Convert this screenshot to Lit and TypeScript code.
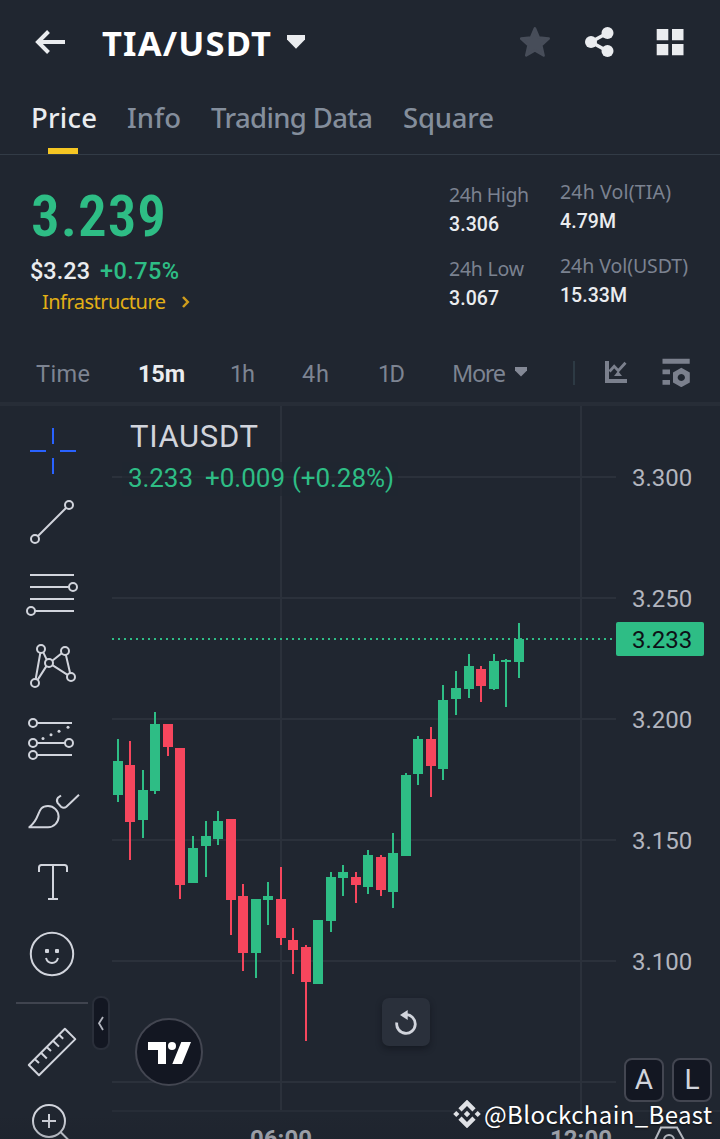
import { LitElement, html, svg, css } from "lit";
import { customElement, property } from "lit/decorators.js";

/** One line of text, tracked so that it fills a given width. */
@customElement("fit-label")
class FitLabel extends LitElement {
  @property() text = "";
  @property({ type: Number }) span = 0;

  static styles = css`
    :host { display: block; flex: none; white-space: pre; }
    .t { display: inline-block; }
  `;

  render() {
    return html`<span class="t">${this.text}</span>`;
  }

  updated() {
    const el = this.renderRoot.querySelector(".t") as HTMLElement;
    this.style.width = `${this.span}px`;
    el.style.letterSpacing = "0px";
    const natural = el.getBoundingClientRect().width;
    el.style.letterSpacing = `${(this.span - natural) / Math.max(1, this.text.length - 1)}px`;
  }
}

// [body left, body top, body bottom, high, low, rising]
const CANDLES: [number, number, number, number, number, number][] = [
  [113, 761, 795, 739, 802, 1], [125, 765, 822, 741, 860, 0], [138, 790, 820, 770, 838, 1],
  [150, 724, 791, 712, 794, 1], [163, 724, 747, 724, 756, 0], [175, 748, 885, 748, 899, 0],
  [188, 848, 883, 836, 883, 1], [201, 836, 846, 821, 877, 1], [213, 821, 839, 811, 845, 1],
  [226, 819, 900, 819, 935, 0], [238, 896, 953, 884, 971, 0], [251, 899, 953, 899, 978, 1],
  [263, 896, 900, 882, 925, 1], [276, 899, 938, 867, 945, 0], [288, 940, 950, 928, 974, 0],
  [301, 947, 982, 945, 1041, 0], [313, 920, 984, 920, 984, 1], [326, 877, 921, 872, 932, 1],
  [338, 872, 878, 865, 896, 1], [351, 877, 885, 872, 903, 0], [363, 855, 887, 850, 894, 1],
  [376, 857, 890, 855, 896, 0], [388, 853, 892, 833, 908, 1], [401, 775, 856, 773, 856, 1],
  [413, 739, 774, 736, 785, 1], [426, 739, 766, 727, 797, 0], [438, 700, 769, 685, 780, 1],
  [451, 688, 699, 671, 715, 1], [464, 666, 689, 654, 698, 1], [476, 669, 686, 666, 702, 0],
  [489, 661, 689, 654, 690, 1], [501, 660, 662, 659, 707, 1], [514, 639, 662, 623, 678, 1],
];

const SCALE: [string, number][] = [
  ["3.300", 477], ["3.250", 598], ["3.200", 719], ["3.150", 840], ["3.100", 961], ["", 1082],
];

const TOOLS = [
  svg`<path class="blue" d="M53 428V444M53 458V474M30 451H46M60 451H76"/>`,
  svg`<path d="M38 536L66 508"/><circle cx="35" cy="539" r="4"/><circle cx="69" cy="505" r="4"/>`,
  svg`<path d="M30 575H74M30 587H69M30 599H74M35 611H74"/><circle cx="73" cy="587" r="4"/><circle cx="31" cy="611" r="4"/>`,
  svg`<path d="M40.3 653L35.7 679M43.3 652.3L46.7 659.7M46.4 666.1L37.6 679.9M52.3 660.8L61.7 653.2M52.4 665.1L67.6 674.9M65.9 655L70.1 673"/>
    <circle cx="41" cy="649" r="4"/><circle cx="65" cy="651" r="4"/><circle cx="49" cy="663" r="4"/><circle cx="35" cy="683" r="4"/><circle cx="71" cy="677" r="4"/>`,
  svg`<path d="M37 723H72M37 743H65M37 755H72"/><circle cx="33" cy="723" r="4"/><circle cx="33" cy="743" r="4"/><circle cx="69" cy="743" r="4"/><circle cx="33" cy="755" r="4"/>
    <g class="dot"><circle cx="43" cy="738.5" r="1.5"/><circle cx="51" cy="734.8" r="1.5"/><circle cx="59" cy="731.2" r="1.5"/><circle cx="68" cy="727.2" r="1.5"/></g>`,
  svg`<path d="M28.500 827.200H48A10.600 10.600 0 0 0 48 806C36 806 41.500 818 29.500 827M61 795.500L58 797.700Q56 800.500 57.600 803L61 806.700Q63.800 808.800 66.400 806.700L79 794.800"/>`,
  svg`<path d="M39 872V867.500Q39 865 41.500 865H64.500Q67 865 67 867.500V872M53 865V899M48 899H58"/>`,
  svg`<circle cx="52" cy="954" r="21.200"/><path d="M46 958Q47.500 963 52 963T58 958"/><g class="dot"><rect x="45" y="949" width="4" height="4" rx="1"/><rect x="55" y="949" width="4" height="4" rx="1"/></g>`,
];

@customElement("app-root")
class AppRoot extends LitElement {
  static styles = css`
    :host { display: block; width: 720px; height: 1139px; overflow: hidden; position: relative;
      background: #202630; color: #eaecef; font-family: "Noto Sans", sans-serif; }
    * { box-sizing: border-box; }
    svg { display: block; flex: none; }
    .top { height: 84px; display: flex; align-items: center; padding: 0 31px 0 30px; }
    .pair { margin-left: 31px; padding-top: 2px; font-size: 34.5px; font-weight: 700; line-height: 82px; color: #fff; }
    .caret { margin-left: 16px; }
    .actions { margin-left: auto; display: flex; align-items: center; }
    .tabs { height: 71px; display: flex; gap: 30px; padding-left: 31px; border-bottom: 1px solid #323b46;
      font-size: 27.5px; font-weight: 500; color: #848e9c; }
    .tab { display: flex; flex-direction: column; align-items: center; }
    .tab .name { height: 64px; line-height: 67px; }
    .on { color: #eaecef; }
    .bar { width: 30px; height: 6px; background: #f5c623; margin-right: 2px; }
    .summary { height: 190px; display: flex; padding-left: 31px; }
    .quote { width: 418px; padding-top: 29px; }
    .last { font: 600 57px/66px Roboto, sans-serif; font-stretch: 85%; color: #2ebd85; }
    .sub { display: flex; gap: 10px; margin: 6px 0 0 -1px; font: 500 23.5px/30px Roboto, sans-serif; font-stretch: 88%; }
    .up { color: #2ebd85; }
    .tag { display: flex; align-items: center; gap: 16px; margin: 2px 0 0 11px; font-size: 20px; line-height: 28px; color: #e3b016; }
    .stats { display: flex; flex-direction: column; gap: 15px; padding-top: 26px; }
    .stats.vol { margin-left: 31px; padding-top: 23px; }
    .key { font-size: 19.5px; line-height: 28px; color: #7b8290; }
    .val { padding-top: 1px; font: 500 19.5px/30px Roboto, sans-serif; font-stretch: 90%; color: #eaecef; }
    .intervals { height: 57px; display: flex; align-items: center; padding-left: 36px;
      font: 400 23.5px/57px Roboto, sans-serif; color: #7d8492; }
    .i0, .i1, .i2, .i3, .i4 { padding-top: 2px; }
    .i1 { margin-left: 48px; font-weight: 700; font-stretch: 90%; } .i2 { margin-left: 45px; } .i3 { margin-left: 47px; }
    .i4 { margin-left: 49px; } .i5 { margin-left: 47px; font-family: "Noto Sans", sans-serif; }
    .more { margin: 0 0 3px 9px; }
    .rule { width: 2px; height: 24px; background: #2d3a44; margin: 0 30px 2px 46px; }
    .study { margin-bottom: 2px; }
    .set { margin: 0 0 2px 34px; }
    .band { height: 4px; background: #272d37; }
    .work { display: flex; height: 733px; }
    .tools { width: 112px; padding-top: 9px; }
    .tools svg { fill: none; stroke: #d1d4dc; stroke-width: 2; }
    .tools .blue { stroke: #2962ff; }
    .tools .dot { fill: #d1d4dc; stroke: none; }
    .sep { width: 72px; height: 2px; margin: 11px 0 12px 16px; background: #40444f; }
    .grid { fill: #2b313b; }
    .g { fill: #2ebd85; } .r { fill: #f6465d; }
    .chart text { font-family: Roboto, sans-serif; font-size: 24px; fill: #b2b5be; }
    .chart .sym { font-size: 31px; fill: #d1d4dc; }
    .chart .chg { font-size: 26px; fill: #2ebd85; }
    .chart .time { font-weight: 700; }
    .chart .now { fill: #0d1117; }
    .collapse { position: absolute; left: 92px; top: 996px; }
    .tv { position: absolute; left: 135px; top: 1018px; }
    .reset { position: absolute; left: 382px; top: 998px; width: 48px; height: 48px; border-radius: 7px;
      background: #2a303b; box-shadow: 0 3px 6px rgba(10, 13, 20, .45); }
    .keys { position: absolute; left: 624px; top: 1058px; display: flex; gap: 8px; }
    .cap { width: 40px; height: 44px; border: 2px solid #434651; border-radius: 8px; background: #131722;
      font: 400 28px/40px Roboto, sans-serif; text-align: center; color: #d1d4dc; }
    .mark { position: absolute; left: 453px; top: 1095px; height: 38px; display: flex; align-items: center; gap: 3px;
      color: #fff; font: 400 24px/38px "Noto Sans CJK SC", sans-serif; text-shadow: 0 1px 2px rgba(0, 0, 0, .6); }
    .fade { position: absolute; left: 0; right: 0; bottom: 0; height: 24px;
      background: linear-gradient(rgba(24, 29, 38, 0), rgba(24, 29, 38, .2)); }
  `;

  private fit(text: string, span: number, cls = "") {
    return html`<fit-label class=${cls} .text=${text} .span=${span}></fit-label>`;
  }

  private stat(key: string, kw: number, val: string, vw: number) {
    return html`<div>${this.fit(key, kw, "key")}${this.fit(val, vw, "val")}</div>`;
  }

  render() {
    return html`
      <div class="top">
        <svg width="41" height="40" viewBox="30 22 41 40" fill="none" stroke="#eaecef" stroke-width="4">
          <path d="M65 42H38M48.500 31.500L38 42L48.500 52.500"/>
        </svg>
        ${this.fit("TIA/USDT", 169, "pair")}
        <svg class="caret" width="18" height="14" viewBox="287 35 18 14" fill="#eaecef"><path d="M287 35H305V39.500L296 48.800L287 39.500Z"/></svg>
        <div class="actions">
          <svg width="169" height="40" viewBox="520 22 169 40">
            <path fill="#474d59" stroke="#474d59" stroke-width="2.500" stroke-linejoin="round" d="M534.900 28.300L538.800 37.500L548.700 38.500L541.300 45.200L543.600 55.500L534.900 50.500L526.200 55.500L528.500 45.200L521.100 38.500L531 37.500Z"/>
            <path d="M607.300 33L591 42L607.300 51" fill="none" stroke="#eaecef" stroke-width="3.500"/>
            <g fill="#eaecef"><circle cx="607.500" cy="33" r="6"/><circle cx="591" cy="42" r="6"/><circle cx="607.500" cy="51" r="6"/>
            <path d="M656.700 29H668.300V40.300H656.700ZM672 29H683.500V40.300H672ZM656.700 44H668.300V55.300H656.700ZM672 44H683.500V55.300H672Z"/></g>
          </svg>
        </div>
      </div>
      <div class="tabs">
        <div class="tab on">${this.fit("Price", 66, "name")}<div class="bar"></div></div>
        <div class="tab">${this.fit("Info", 54, "name")}</div>
        <div class="tab">${this.fit("Trading Data", 162, "name")}</div>
        <div class="tab">${this.fit("Square", 91, "name")}</div>
      </div>
      <div class="summary">
        <div class="quote">
          ${this.fit("3.239", 135, "last")}
          <div class="sub">${this.fit("$3.23", 60)}${this.fit("+0.75%", 79, "up")}</div>
          <div class="tag">${this.fit("Infrastructure", 124)}
            <svg width="8" height="14" viewBox="182.500 295 8 14" fill="none" stroke="#cf9d1c" stroke-width="2.500"><path d="M183.500 297L188.300 302L183.500 307"/></svg>
          </div>
        </div>
        <div class="stats">${this.stat("24h High", 80, "3.306", 50)}${this.stat("24h Low", 75, "3.067", 50)}</div>
        <div class="stats vol">${this.stat("24h Vol(TIA)", 111, "4.79M", 56)}${this.stat("24h Vol(USDT)", 128, "15.33M", 67)}</div>
      </div>
      <div class="intervals">
        ${this.fit("Time", 54, "i0")}${this.fit("15m", 47, "i1 on")}${this.fit("1h", 25, "i2")}${this.fit("4h", 27, "i3")}${this.fit("1D", 27, "i4")}${this.fit("More", 54, "i5")}
        <svg class="more" width="12" height="12" viewBox="515 366 12 12" fill="#848996"><path d="M515 367H527V370.500L521 376.500L515 370.500Z"/></svg>
        <div class="rule"></div>
        <svg class="study" width="23" height="29" viewBox="605 358 23 29" fill="#7b808d">
          <path d="M605 361H609V379H627V383H605Z"/><path d="M618 371L622 376H614Z"/>
          <path d="M609.500 371.500L614.200 366.300L618.300 370.600L625.500 362.800" fill="none" stroke="#7b808d" stroke-width="2.800"/>
        </svg>
        <svg class="set" width="28" height="29" viewBox="662 358 28 29" fill="#7b808d">
          <path d="M662.500 358.700H689.700V363.800H662.500ZM662.500 369.500H670V374.300H662.500ZM662.500 380H670V384.800H662.500Z"/>
          <path fill-rule="evenodd" d="M681.300 367.800L689.800 372.600V382.400L681.300 387.200L673 382.400V372.600ZM681.300 373.900a3.600 3.600 0 1 0 .01 0Z"/>
        </svg>
      </div>
      <div class="band"></div>
      <div class="work">
        <div class="tools">
          ${TOOLS.map((t, i) => html`<svg width="112" height="72" viewBox=${`0 ${415 + 72 * i} 112 72`}>${t}</svg>`)}
          <div class="sep"></div>
          <svg width="112" height="72" viewBox="0 1016 112 72">
            <path stroke-linejoin="round" d="M64.900 1028.700L75.300 1039.100L39 1075.300L28.800 1065ZM34.700 1059L39 1063M41 1052.700L46.800 1058.500M46.700 1047L51 1051M53 1040.700L59 1046.600M59 1034.700L63.200 1038.700"/>
          </svg>
          <svg width="112" height="51" viewBox="0 1088 112 51"><circle cx="49" cy="1121" r="16"/><path d="M42 1121H56M49 1114V1128M60.500 1132L69 1140.500"/></svg>
        </div>
        <svg class="chart" width="608" height="733" viewBox="112 406 608 733">
          <g class="grid">
            <rect x="280" y="406" width="2" height="704"/><rect x="580" y="406" width="2" height="704"/>
            ${SCALE.map(([, y]) => svg`<rect x="112" y=${y - 1} width="504" height="2"/>`)}
            <rect x="112" y="1110" width="608" height="2" opacity=".7"/>
          </g>
          <rect x="122" y="462" width="276" height="34" fill="#202630" opacity=".6"/>
          <path d="M112 639H616" stroke="#2ebd85" stroke-width="2" stroke-dasharray="2 4"/>
          ${CANDLES.map(([x, t, b, h, l, up]) => svg`<g class=${up ? "g" : "r"}>
            <rect x=${x} y=${t} width="10" height=${b - t}/><rect x=${x + 4} y=${h} width="2" height=${l - h}/></g>`)}
          <text class="sym" x="130" y="447" textLength="128">TIAUSDT</text>
          <text class="chg" x="128" y="487" textLength="65">3.233</text>
          <text class="chg" x="205" y="487" textLength="80">+0.009</text>
          <text class="chg" x="292" y="487" textLength="102">(+0.28%)</text>
          ${SCALE.filter(([s]) => s).map(([s, y]) => svg`<text x="632" y=${y + 9}>${s}</text>`)}
          <rect x="616" y="622" width="88" height="34" rx="2" class="g"/>
          <text class="now" x="632" y="648">3.233</text>
          <text class="time" x="281" y="1147" text-anchor="middle">06:00</text>
          <text class="time" x="581" y="1147" text-anchor="middle">12:00</text>
          <g fill="none" stroke="#d1d4dc" stroke-width="2"><path d="M655 1140L661 1127.500H677L684 1140"/><circle cx="669" cy="1140" r="5"/></g>
        </svg>
      </div>
      <svg class="collapse" width="18" height="54" viewBox="92 996 18 54">
        <rect x="93" y="997" width="16" height="52" rx="7" fill="#131722" stroke="#2a2f3a" stroke-width="2"/>
        <path d="M103 1017L99 1023.300L103 1030" fill="none" stroke="#b2b5be" stroke-width="1.800"/>
      </svg>
      <svg class="tv" width="68" height="68" viewBox="135 1018 68 68">
        <circle cx="169" cy="1052" r="33" fill="#131722" stroke="#434651" stroke-width="2"/>
        <g fill="#fff"><path d="M148 1042H166V1064H158V1050H148ZM181.300 1042H191L182 1064H172.300Z"/><circle cx="172" cy="1046" r="4"/></g>
      </svg>
      <div class="reset"><svg width="48" height="48" viewBox="382 998 48 48">
        <path d="M396.800 1022.500A9.300 9.300 0 1 0 406 1014.700" fill="none" stroke="#d1d4dc" stroke-width="2.800"/>
        <path d="M400 1015L407.700 1010V1020Z" fill="#d1d4dc"/></svg></div>
      <div class="keys"><div class="cap">A</div><div class="cap">L</div></div>
      <div class="fade"></div>
      <div class="mark">
        <svg width="28" height="28" viewBox="0 0 28 28" fill="#dfe1e5">
          <path d="M8.600 11.400L14 6L19.400 11.400L22.600 8.300L14 -.3L5.400 8.300ZM8.600 16.600L14 22L19.400 16.600L22.600 19.700L14 28.300L5.400 19.700ZM.2 14L3.300 10.900L6.400 14L3.300 17.100ZM21.600 14L24.700 10.900L27.800 14L24.700 17.100ZM14 10.800L17.200 14L14 17.200L10.800 14Z"/>
        </svg>
        ${this.fit("@Blockchain_Beast", 228)}
      </div>
    `;
  }
}
